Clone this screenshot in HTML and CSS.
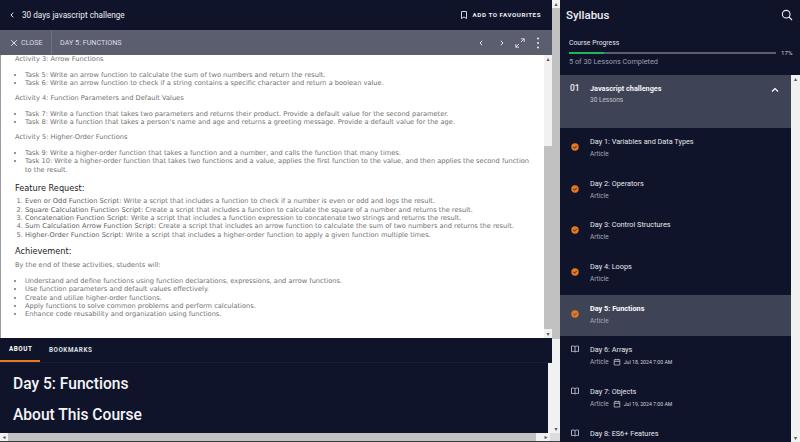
FILE: index.html
```html
<!DOCTYPE html>
<html lang="en">
<head>
<meta charset="utf-8">
<title>30 days javascript challenge</title>
<link rel="stylesheet" href="styles.css">
</head>
<body>
<div class="page">
  <div class="left-wrap">
    <div class="left-row">
      <main class="main">
        <header class="topbar">
          <svg class="ic-back" viewBox="0 0 8 10" width="8" height="10"><path d="M5.2 2.7 L3 5 L5.2 7.3" fill="none" stroke="#e8e9ee" stroke-width="1"/></svg>
          <span class="course-title">30 days javascript challenge</span>
          <span class="spacer"></span>
          <svg class="ic-bm" viewBox="0 0 8 10" width="8" height="10"><path d="M1.5 1.5 H6.5 V8.5 L4 7 L1.5 8.5 Z" fill="none" stroke="#e8e9ee" stroke-width=".9"/></svg>
          <span class="fav">ADD TO FAVOURITES</span>
        </header>
        <div class="toolbar">
          <div class="close">
            <svg viewBox="0 0 8 8" width="8" height="8"><path d="M1.2 1.2 L6.8 6.8 M6.8 1.2 L1.2 6.8" stroke="#dcdde3" stroke-width="1"/></svg>
            <span>CLOSE</span>
          </div>
          <div class="crumb">DAY 5: FUNCTIONS</div>
          <span class="spacer"></span>
          <svg class="tb-prev" viewBox="0 0 8 10" width="8" height="10"><path d="M5.2 2.8 L3 5 L5.2 7.2" fill="none" stroke="#e6e7ec" stroke-width="1"/></svg>
          <svg class="tb-next" viewBox="0 0 8 10" width="8" height="10"><path d="M2.8 2.8 L5 5 L2.8 7.2" fill="none" stroke="#e6e7ec" stroke-width="1"/></svg>
          <svg class="tb-exp" viewBox="0 0 10 10" width="10" height="10"><path d="M6 .8 H9.2 V4 M9.2 .8 L6 4 M4 9.2 H.8 V6 M.8 9.2 L4 6" fill="none" stroke="#e6e7ec" stroke-width=".9"/></svg>
          <svg class="tb-more" viewBox="0 0 4 12" width="4" height="12"><circle cx="2" cy="1.5" r="1" fill="#eceef2"/><circle cx="2" cy="6" r="1" fill="#eceef2"/><circle cx="2" cy="10.5" r="1" fill="#eceef2"/></svg>
        </div>
        <div class="frame">
          <article class="doc">
            <p class="act act-first">Activity 3: Arrow Functions</p>
            <ul>
              <li>Task 5: Write an arrow function to calculate the sum of two numbers and return the result.</li>
              <li>Task 6: Write an arrow function to check if a string contains a specific character and return a boolean value.</li>
            </ul>
            <p class="act">Activity 4: Function Parameters and Default Values</p>
            <ul>
              <li>Task 7: Write a function that takes two parameters and returns their product. Provide a default value for the second parameter.</li>
              <li>Task 8: Write a function that takes a person's name and age and returns a greeting message. Provide a default value for the age.</li>
            </ul>
            <p class="act">Activity 5: Higher-Order Functions</p>
            <ul>
              <li>Task 9: Write a higher-order function that takes a function and a number, and calls the function that many times.</li>
              <li>Task 10: Write a higher-order function that takes two functions and a value, applies the first function to the value, and then applies the second function to the result.</li>
            </ul>
            <h3>Feature Request:</h3>
            <ol>
              <li><b>Even or Odd Function Script:</b> Write a script that includes a function to check if a number is even or odd and logs the result.</li>
              <li><b>Square Calculation Function Script:</b> Create a script that includes a function to calculate the square of a number and returns the result.</li>
              <li><b>Concatenation Function Script:</b> Write a script that includes a function expression to concatenate two strings and returns the result.</li>
              <li><b>Sum Calculation Arrow Function Script:</b> Create a script that includes an arrow function to calculate the sum of two numbers and returns the result.</li>
              <li><b>Higher-Order Function Script:</b> Write a script that includes a higher-order function to apply a given function multiple times.</li>
            </ol>
            <h3 class="h-ach">Achievement:</h3>
            <p class="act intro">By the end of these activities, students will:</p>
            <ul>
              <li>Understand and define functions using function declarations, expressions, and arrow functions.</li>
              <li>Use function parameters and default values effectively.</li>
              <li>Create and utilize higher-order functions.</li>
              <li>Apply functions to solve common problems and perform calculations.</li>
              <li>Enhance code reusability and organization using functions.</li>
            </ul>
          </article>
          <div class="vbar inner-bar"><span class="arrow">▴</span><span class="thumb"></span><span class="arrow">▾</span></div>
        </div>
        <nav class="tabs">
          <span class="tab active">ABOUT</span>
          <span class="tab">BOOKMARKS</span>
        </nav>
        <section class="about">
          <h1>Day 5: Functions</h1>
          <h2>About This Course</h2>
        </section>
      </main>
      <div class="vbar outer-bar"><span class="arrow">▴</span><span class="thumb"></span><span class="spacer"></span><span class="arrow">▾</span></div>
    </div>
    <div class="hbar"><span class="harrow">◂</span><span class="hthumb"></span><span class="spacer"></span><span class="harrow">▸</span><span class="hcorner"></span></div>
  </div>
  <aside class="side">
    <div class="side-head">
      <span class="side-title">Syllabus</span>
      <svg viewBox="0 0 12 12" width="12" height="12"><circle cx="5.2" cy="5.2" r="3.8" fill="none" stroke="#eef0f4" stroke-width="1.1"/><path d="M8 8 L11 11" stroke="#eef0f4" stroke-width="1.1"/></svg>
    </div>
    <div class="progress">
      <div class="p-label">Course Progress</div>
      <div class="p-row"><div class="p-track"><div class="p-fill"></div></div><span class="p-pct">17%</span></div>
      <div class="p-done">5 of 30 Lessons Completed</div>
    </div>
    <div class="list-wrap">
      <div class="list">
        <div class="section">
          <span class="num">01</span>
          <div class="sec-text"><div class="sec-title">Javascript challenges</div><div class="sec-sub">30 Lessons</div></div>
          <svg viewBox="0 0 10 6" width="10" height="6"><path d="M2 4.5 L5 1.5 L8 4.5" fill="none" stroke="#fff" stroke-width="1.2"/></svg>
        </div>
        <div class="item"><svg class="st" viewBox="0 0 10 10" width="10" height="10"><circle cx="5" cy="5" r="3.7" fill="#e8781e"/><path d="M3.3 5.1 L4.5 6.2 L6.7 3.9" fill="none" stroke="#141a30" stroke-width=".9"/></svg><div><div class="it-title">Day 1: Variables and Data Types</div><div class="it-meta">Article</div></div></div>
        <div class="item"><svg class="st" viewBox="0 0 10 10" width="10" height="10"><circle cx="5" cy="5" r="3.7" fill="#e8781e"/><path d="M3.3 5.1 L4.5 6.2 L6.7 3.9" fill="none" stroke="#141a30" stroke-width=".9"/></svg><div><div class="it-title">Day 2: Operators</div><div class="it-meta">Article</div></div></div>
        <div class="item"><svg class="st" viewBox="0 0 10 10" width="10" height="10"><circle cx="5" cy="5" r="3.7" fill="#e8781e"/><path d="M3.3 5.1 L4.5 6.2 L6.7 3.9" fill="none" stroke="#141a30" stroke-width=".9"/></svg><div><div class="it-title">Day 3: Control Structures</div><div class="it-meta">Article</div></div></div>
        <div class="item"><svg class="st" viewBox="0 0 10 10" width="10" height="10"><circle cx="5" cy="5" r="3.7" fill="#e8781e"/><path d="M3.3 5.1 L4.5 6.2 L6.7 3.9" fill="none" stroke="#141a30" stroke-width=".9"/></svg><div><div class="it-title">Day 4: Loops</div><div class="it-meta">Article</div></div></div>
        <div class="item current"><svg class="st" viewBox="0 0 10 10" width="10" height="10"><circle cx="5" cy="5" r="3.7" fill="#e8781e"/><path d="M3.3 5.1 L4.5 6.2 L6.7 3.9" fill="none" stroke="#3f4356" stroke-width=".9"/></svg><div><div class="it-title">Day 5: Functions</div><div class="it-meta">Article</div></div></div>
        <div class="item"><svg class="st book" viewBox="0 0 10 10" width="10" height="10"><path d="M5 2.6 C4 1.9 2.6 1.9 1.5 2.2 V7.6 C2.6 7.3 4 7.3 5 8 C6 7.3 7.4 7.3 8.5 7.6 V2.2 C7.4 1.9 6 1.9 5 2.6 Z M5 2.6 V8" fill="none" stroke="#d6d8e0" stroke-width=".8"/></svg><div><div class="it-title">Day 6: Arrays</div><div class="it-meta">Article<svg class="cal" viewBox="0 0 8 8" width="8" height="8"><path d="M1.2 1.7 H6.8 V7 H1.2 Z M1.2 3.4 H6.8 M2.8 .8 V2.2 M5.2 .8 V2.2" fill="none" stroke="#cfd1da" stroke-width=".7"/></svg><span class="date">Jul 18, 2024 7:00 AM</span></div></div></div>
        <div class="item"><svg class="st book" viewBox="0 0 10 10" width="10" height="10"><path d="M5 2.6 C4 1.9 2.6 1.9 1.5 2.2 V7.6 C2.6 7.3 4 7.3 5 8 C6 7.3 7.4 7.3 8.5 7.6 V2.2 C7.4 1.9 6 1.9 5 2.6 Z M5 2.6 V8" fill="none" stroke="#d6d8e0" stroke-width=".8"/></svg><div><div class="it-title">Day 7: Objects</div><div class="it-meta">Article<svg class="cal" viewBox="0 0 8 8" width="8" height="8"><path d="M1.2 1.7 H6.8 V7 H1.2 Z M1.2 3.4 H6.8 M2.8 .8 V2.2 M5.2 .8 V2.2" fill="none" stroke="#cfd1da" stroke-width=".7"/></svg><span class="date">Jul 19, 2024 7:00 AM</span></div></div></div>
        <div class="item"><svg class="st book" viewBox="0 0 10 10" width="10" height="10"><path d="M5 2.6 C4 1.9 2.6 1.9 1.5 2.2 V7.6 C2.6 7.3 4 7.3 5 8 C6 7.3 7.4 7.3 8.5 7.6 V2.2 C7.4 1.9 6 1.9 5 2.6 Z M5 2.6 V8" fill="none" stroke="#d6d8e0" stroke-width=".8"/></svg><div><div class="it-title">Day 8: ES6+ Features</div></div></div>
      </div>
      <div class="vbar list-bar"><span class="arrow">▴</span><span class="spacer"></span><span class="arrow">▾</span></div>
    </div>
  </aside>
</div>
</body>
</html>
```

FILE: styles.css
```css
* { box-sizing: border-box; }
html, body { margin: 0; height: 100%; overflow: hidden; background: #10142a; }
body { font-family: Roboto, sans-serif; }
.page { display: flex; width: 800px; height: 442px; }
.spacer { flex: 1; }

.left-wrap { width: 560px; height: 442px; display: flex; flex-direction: column; background: #f1f1f1; border-bottom: 1px solid #3a3c48; }
.left-row { display: flex; height: 433px; flex: none; }
.main { width: 552px; display: flex; flex-direction: column; overflow: hidden; background: #f1f1f1; }

.topbar { height: 30px; flex: none; display: flex; align-items: center; padding: 0 10px 0 8px; background: #10142a; color: #eceef3; }
.course-title { font-size: 8.2px; margin-left: 6px; }
.ic-bm { margin-right: 5px; }
.fav { font-size: 6.2px; font-weight: 700; letter-spacing: .55px; margin-right: 1px; }

.toolbar { height: 25px; flex: none; display: flex; align-items: center; background: #5b5e6e; color: #dcdde3; font-size: 7.2px; }
.close { width: 52px; height: 100%; display: flex; align-items: center; gap: 3px; padding-left: 10px; border-right: 1px solid #6f7280; }
.crumb { padding-left: 8px; }
.tb-prev { margin-right: 13px; }
.tb-next { margin-right: 9px; }
.tb-exp { margin-right: 11px; }
.tb-more { margin-right: 12px; }

.frame { height: 283px; flex: none; display: flex; background: #fff; border-left: 1px solid #9a9ca6; overflow: hidden; }
.doc { flex: 1; min-width: 0; padding: 0 14px; color: #707070; font-family: "DejaVu Sans", sans-serif; font-size: 6.65px; line-height: 8.3px; }
.doc p, .doc ul, .doc ol, .doc h3 { margin: 0; }
.doc ul, .doc ol { padding-left: 10px; margin: 7.3px 0 7px; }
.doc ol { margin-top: 3.5px; }
.doc .act { color: #707070; }
.doc .intro { margin-top: 0; }
.doc b { font-weight: 400; color: #5a5a5a; letter-spacing: .05px; }
.doc h3 { font-size: 8.2px; font-weight: 400; color: #222; line-height: 11px; margin: 9px 0 3px; }
.doc .h-ach { margin: 7.5px 0 4px; }

.vbar { width: 8px; flex: none; display: flex; flex-direction: column; align-items: center; background: #f1f1f1; }
.arrow { font-size: 6px; line-height: 8px; color: #555; height: 8px; font-family: "DejaVu Sans", sans-serif; }
.thumb { width: 100%; background: #c1c1c1; }
.inner-bar .thumb { margin-top: 83px; flex: 1; margin-bottom: 1px; }
.outer-bar .thumb { height: 331px; flex: none; }

.tabs { height: 25px; flex: none; display: flex; align-items: center; background: #10142a; border-bottom: 1px solid #1b1f36; }
.tab { height: 100%; display: flex; align-items: center; font-size: 6.3px; font-weight: 700; letter-spacing: .55px; color: #dfe1e8; padding: 0 9px; }
.tab.active { width: 40px; border-bottom: 2px solid #e8781e; color: #fff; }
.about { flex: 1; margin-right: 4px; padding: 0 13px; color: #f4f5f8; background: #10142a; }
.about h1, .about h2 { margin: 0; font-size: 15.6px; font-weight: 500; line-height: 18px; }
.about h1 { margin-top: 12px; margin-bottom: 13px; }

.hbar { height: 8px; flex: none; display: flex; background: #f1f1f1; }
.harrow { width: 8px; font-size: 6px; line-height: 8px; color: #555; text-align: center; font-family: "DejaVu Sans", sans-serif; }
.hthumb { width: 528px; background: #c1c1c1; }
.hcorner { width: 10px; background: #dcdcdc; }

.side { width: 240px; height: 442px; display: flex; flex-direction: column; background: #10142a; color: #eceef3; }
.side-head { height: 30px; flex: none; display: flex; align-items: center; justify-content: space-between; padding: 0 7px 0 6px; }
.side-title { font-size: 11.5px; font-weight: 500; }
.progress { height: 45px; flex: none; padding: 9px 0 0 9px; }
.p-label { font-size: 6.8px; line-height: 9px; color: #e2e4ea; }
.p-row { display: flex; align-items: center; gap: 5px; height: 8px; margin-top: 1px; }
.p-track { width: 207px; flex: none; height: 2px; background: #5b5e6e; }
.p-fill { width: 17%; height: 100%; background: #22b35e; }
.p-pct { font-size: 6.2px; color: #c7c9d2; }
.p-done { font-size: 7.3px; line-height: 10px; color: #9c9fac; }

.list-wrap { flex: 1; min-height: 0; display: flex; overflow: hidden; }
.list { flex: 1; min-width: 0; overflow: hidden; }
.list-bar { width: 9px; }
.section { height: 53px; display: flex; align-items: flex-start; background: #3f4356; padding: 8px 11px 0 10px; }
.num { width: 20px; font-size: 8.5px; font-weight: 500; line-height: 11px; }
.sec-text { flex: 1; }
.sec-title { font-size: 7.3px; font-weight: 700; line-height: 11px; color: #f2f3f6; }
.sec-sub { font-size: 6.5px; line-height: 10px; color: #bfc1cc; margin-top: 1px; }
.section svg { margin: 4px 0 0; }

.item { height: 41.67px; display: flex; align-items: flex-start; padding: 9px 0 0 10px; }
.item .st { margin: 5px 10px 0 0; flex: none; }
.item .book { margin-top: -1px; }
.item.current { background: #3f4356; }
.item.current .it-title { font-weight: 700; color: #fff; }
.it-title { font-size: 7.3px; line-height: 10px; color: #e4e6ec; }
.it-meta { display: flex; align-items: center; font-size: 6.5px; line-height: 10px; color: #a6a8b5; margin-top: 2px; }
.cal { margin: 0 3px 0 4px; }
.date { font-size: 5.2px; color: #d0d2da; }
```
